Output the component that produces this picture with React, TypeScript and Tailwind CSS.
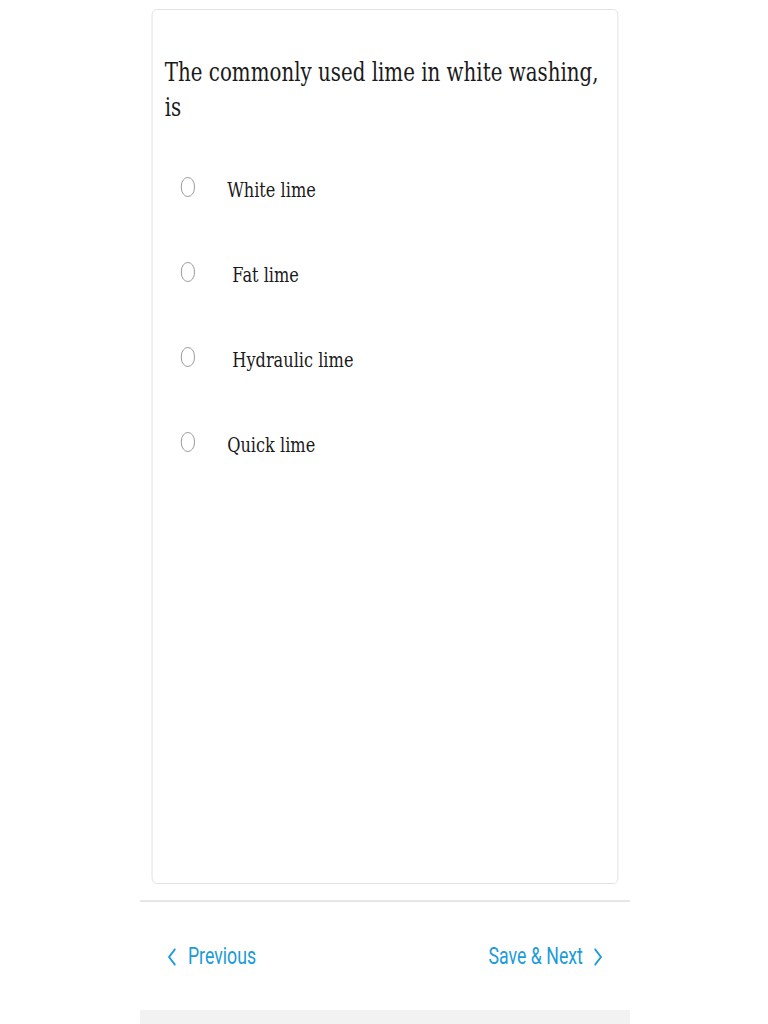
const options = ['White lime', ' Fat lime', ' Hydraulic lime', 'Quick lime'];

function Chevron({ dir }: { dir: 'left' | 'right' }) {
  return (
    <svg width="12" height="18" viewBox="0 0 12 18" fill="none" className="shrink-0">
      <path
        d={dir === 'left' ? 'M10 1.5 2.5 9l7.5 7.5' : 'M2 1.5 9.5 9 2 16.5'}
        stroke="currentColor"
        strokeWidth="2.2"
        strokeLinecap="round"
        strokeLinejoin="round"
      />
    </svg>
  );
}

export default function App() {
  return (
    <div className="h-screen overflow-hidden bg-white flex justify-center pl-[2px]">
      {/* the reference is a phone screenshot squeezed sideways, so the column is drawn wide and squeezed */}
      <div className="w-[636px] shrink-0 scale-x-[0.77] flex flex-col bg-white">
        <div className="mx-[15px] mt-[9px] h-[875px] shrink-0 rounded-md border border-[#dedede] bg-white pl-4 pr-2 pt-[45px]">
          <p
            className="text-[25.75px] leading-[35px] text-[#1a1a1a]"
            style={{ fontFamily: '"DejaVu Serif", "Liberation Serif", serif' }}
          >
            The commonly used lime in white washing, is
          </p>
          <div className="mt-[22px] flex flex-col">
            {options.map((o) => (
              <label key={o} className="flex h-[85px] items-center pl-[21px]">
                <span className="mb-[6px] h-[20px] w-[18px] shrink-0 rounded-full border-[1.5px] border-[#8f8f8f] bg-white" />
                <span
                  className="ml-[42px] whitespace-pre text-[21px] leading-[28px] text-[#1a1a1a]"
                  style={{ fontFamily: '"DejaVu Serif", "Liberation Serif", serif' }}
                >
                  {o}
                </span>
              </label>
            ))}
          </div>
        </div>

        <div className="mt-4 h-[2px] shrink-0 bg-[#e6e6e6]" />

        <div
          className="flex h-[108px] shrink-0 items-center justify-between px-[35px] pt-[2px] text-[23px] text-[#1b9bd7]"
          style={{ fontFamily: 'Roboto, "Noto Sans", sans-serif' }}
        >
          <button className="flex items-center gap-[15px]">
            <Chevron dir="left" />
            <span>Previous</span>
          </button>
          <button className="flex items-center gap-[14px]">
            <span>Save &amp; Next</span>
            <Chevron dir="right" />
          </button>
        </div>

        <div className="h-[60px] shrink-0 bg-[#f2f2f2]" />
      </div>
    </div>
  );
}
